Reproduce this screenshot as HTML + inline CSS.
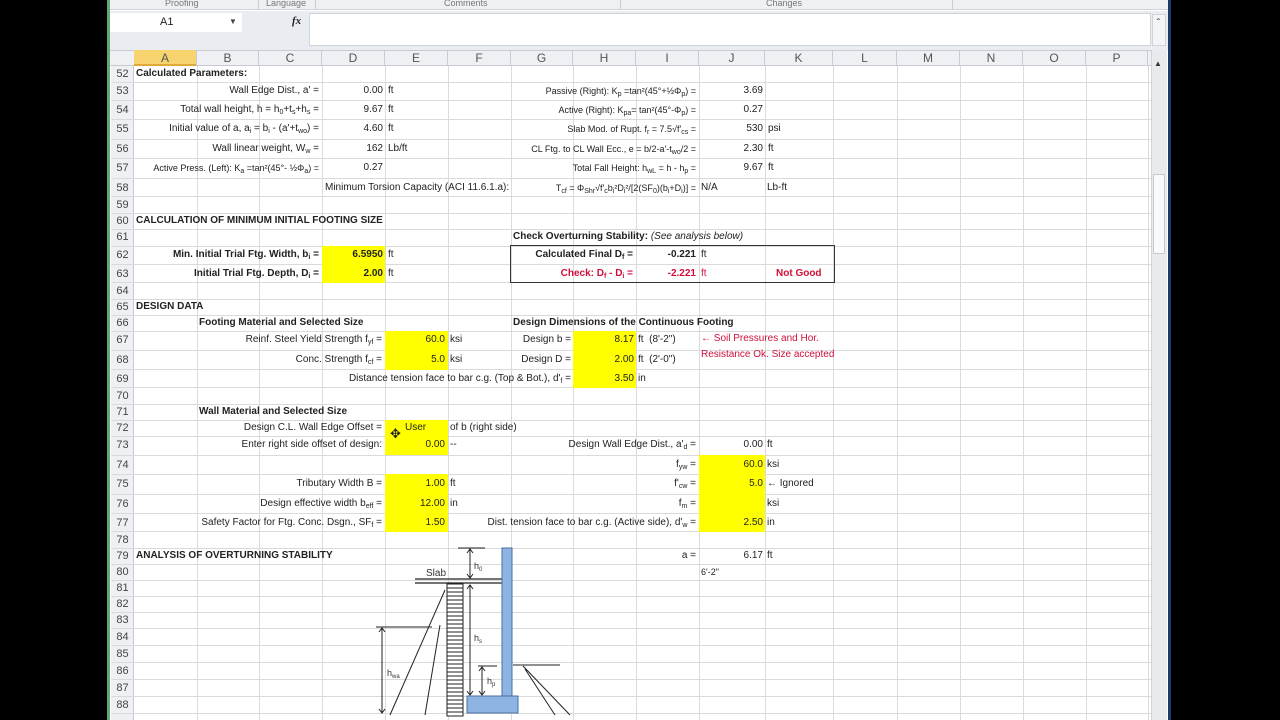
<!DOCTYPE html>
<html><head><meta charset="utf-8"><style>
*{margin:0;padding:0;box-sizing:border-box}
body{width:1280px;height:720px;background:#000;position:relative;overflow:hidden;font-family:"Liberation Sans",Arial,sans-serif;font-size:10px;color:#222}
.a{position:absolute;white-space:nowrap;line-height:12px}
.b{font-weight:bold}
.red{color:#d0103a}
.y{position:absolute;background:#ffff00}
.h{position:absolute;left:111px;height:1px;width:1040px;background:#dadada}
.v{position:absolute;top:66px;width:1px;height:654px;background:#dadada}
.rn{position:absolute;left:111px;width:23px;text-align:center;color:#444;font-size:11px;line-height:12px}
.ch{position:absolute;top:50px;height:16px;text-align:center;color:#555;font-size:12px;line-height:16px;border-right:1px solid #c8ccd2}
sub{font-size:7px;vertical-align:-2px;line-height:0}
sup{font-size:7px;line-height:0}
</style></head><body>
<div style="position:absolute;left:107px;top:0;width:1062px;height:720px;background:#fff"></div>
<div style="position:absolute;left:107px;top:0;width:3px;height:720px;background:#5faa6a"></div>
<!-- ribbon labels -->
<div style="position:absolute;left:110px;top:0;width:1058px;height:10px;background:#eef0f3;border-bottom:1px solid #cfd4da"></div>
<div class="a" style="left:165px;top:-3px;color:#777;font-size:9px">Proofing</div>
<div class="a" style="left:266px;top:-3px;color:#777;font-size:9px">Language</div>
<div class="a" style="left:444px;top:-3px;color:#777;font-size:9px">Comments</div>
<div class="a" style="left:766px;top:-3px;color:#777;font-size:9px">Changes</div>
<div style="position:absolute;left:258px;top:0;width:1px;height:10px;background:#ccc"></div>
<div style="position:absolute;left:315px;top:0;width:1px;height:10px;background:#ccc"></div>
<div style="position:absolute;left:620px;top:0;width:1px;height:10px;background:#ccc"></div>
<div style="position:absolute;left:952px;top:0;width:1px;height:10px;background:#ccc"></div>
<!-- formula bar -->
<div style="position:absolute;left:110px;top:11px;width:1058px;height:39px;background:#e9ecf0"></div>
<div style="position:absolute;left:110px;top:13px;width:132px;height:19px;background:#fff"></div>
<div class="a" style="left:160px;top:16px;font-size:11px;color:#222">A1</div>
<div class="a" style="left:229px;top:16px;font-size:8px;color:#444">▼</div>
<div class="a" style="left:292px;top:15px;font-size:11px;font-style:italic;font-family:'Liberation Serif',serif;font-weight:bold">fx</div>
<div style="position:absolute;left:309px;top:13px;width:842px;height:33px;background:#fff;border:1px solid #d0d4d9"></div>
<div style="position:absolute;left:1152px;top:14px;width:14px;height:32px;background:#f4f5f7;border:1px solid #d0d4d9"></div>
<div class="a" style="left:1155px;top:16px;font-size:8px;color:#444">⌃</div>
<!-- column headers -->
<div style="position:absolute;left:110px;top:50px;width:1042px;height:16px;background:#eef0f3;border-top:1px solid #c8ccd2;border-bottom:1px solid #c8ccd2"></div>
<div style="position:absolute;left:134px;top:50px;width:63px;height:16px;background:#f7d46e;border-bottom:2px solid #e0a93b"></div>
<div class="ch" style="left:134px;width:63px">A</div><div class="ch" style="left:197px;width:62px">B</div><div class="ch" style="left:259px;width:63px">C</div><div class="ch" style="left:322px;width:63px">D</div><div class="ch" style="left:385px;width:63px">E</div><div class="ch" style="left:448px;width:63px">F</div><div class="ch" style="left:511px;width:62px">G</div><div class="ch" style="left:573px;width:63px">H</div><div class="ch" style="left:636px;width:63px">I</div><div class="ch" style="left:699px;width:66px">J</div><div class="ch" style="left:765px;width:68px">K</div><div class="ch" style="left:833px;width:64px">L</div><div class="ch" style="left:897px;width:63px">M</div><div class="ch" style="left:960px;width:63px">N</div><div class="ch" style="left:1023px;width:63px">O</div><div class="ch" style="left:1086px;width:62px">P</div>
<!-- row header column -->
<div style="position:absolute;left:111px;top:66px;width:23px;height:654px;background:#eef0f3;border-right:1px solid #c8ccd2"></div>
<!-- scrollbar -->
<div style="position:absolute;left:1151px;top:50px;width:16px;height:670px;background:#e8eaee;border-left:1px solid #d0d4d9"></div>
<div style="position:absolute;left:1153px;top:174px;width:12px;height:80px;background:#f8f9fa;border:1px solid #c6cad0"></div>
<div class="a" style="left:1154px;top:58px;font-size:8px;color:#333">▲</div>
<div style="position:absolute;left:1168px;top:0;width:3px;height:720px;background:#1b3b6a"></div>
<!-- grid -->
<div class="v" style="left:197px"></div><div class="v" style="left:259px"></div><div class="v" style="left:322px"></div><div class="v" style="left:385px"></div><div class="v" style="left:448px"></div><div class="v" style="left:511px"></div><div class="v" style="left:573px"></div><div class="v" style="left:636px"></div><div class="v" style="left:699px"></div><div class="v" style="left:765px"></div><div class="v" style="left:833px"></div><div class="v" style="left:897px"></div><div class="v" style="left:960px"></div><div class="v" style="left:1023px"></div><div class="v" style="left:1086px"></div><div class="v" style="left:1148px"></div>
<div class="h" style="top:82px"></div><div class="h" style="top:100px"></div><div class="h" style="top:119px"></div><div class="h" style="top:139px"></div><div class="h" style="top:158px"></div><div class="h" style="top:178px"></div><div class="h" style="top:196px"></div><div class="h" style="top:213px"></div><div class="h" style="top:229px"></div><div class="h" style="top:246px"></div><div class="h" style="top:264px"></div><div class="h" style="top:282px"></div><div class="h" style="top:299px"></div><div class="h" style="top:315px"></div><div class="h" style="top:331px"></div><div class="h" style="top:350px"></div><div class="h" style="top:369px"></div><div class="h" style="top:387px"></div><div class="h" style="top:404px"></div><div class="h" style="top:420px"></div><div class="h" style="top:436px"></div><div class="h" style="top:455px"></div><div class="h" style="top:474px"></div><div class="h" style="top:494px"></div><div class="h" style="top:513px"></div><div class="h" style="top:531px"></div><div class="h" style="top:548px"></div><div class="h" style="top:564px"></div><div class="h" style="top:580px"></div><div class="h" style="top:596px"></div><div class="h" style="top:612px"></div><div class="h" style="top:628px"></div><div class="h" style="top:645px"></div><div class="h" style="top:662px"></div><div class="h" style="top:679px"></div><div class="h" style="top:696px"></div><div class="h" style="top:713px"></div>
<!-- row numbers -->
<div class="rn" style="top:68px">52</div><div class="rn" style="top:85px">53</div><div class="rn" style="top:104px">54</div><div class="rn" style="top:123px">55</div><div class="rn" style="top:143px">56</div><div class="rn" style="top:162px">57</div><div class="rn" style="top:182px">58</div><div class="rn" style="top:199px">59</div><div class="rn" style="top:215px">60</div><div class="rn" style="top:231px">61</div><div class="rn" style="top:249px">62</div><div class="rn" style="top:268px">63</div><div class="rn" style="top:285px">64</div><div class="rn" style="top:301px">65</div><div class="rn" style="top:317px">66</div><div class="rn" style="top:334px">67</div><div class="rn" style="top:354px">68</div><div class="rn" style="top:373px">69</div><div class="rn" style="top:390px">70</div><div class="rn" style="top:406px">71</div><div class="rn" style="top:422px">72</div><div class="rn" style="top:439px">73</div><div class="rn" style="top:459px">74</div><div class="rn" style="top:478px">75</div><div class="rn" style="top:498px">76</div><div class="rn" style="top:517px">77</div><div class="rn" style="top:534px">78</div><div class="rn" style="top:550px">79</div><div class="rn" style="top:566px">80</div><div class="rn" style="top:582px">81</div><div class="rn" style="top:598px">82</div><div class="rn" style="top:614px">83</div><div class="rn" style="top:631px">84</div><div class="rn" style="top:648px">85</div><div class="rn" style="top:665px">86</div><div class="rn" style="top:682px">87</div><div class="rn" style="top:699px">88</div>
<!-- yellow cells -->
<div class="y" style="left:322px;top:246px;width:63px;height:37px"></div>
<div class="y" style="left:385px;top:331px;width:63px;height:39px"></div>
<div class="y" style="left:573px;top:331px;width:63px;height:57px"></div>
<div class="y" style="left:385px;top:420px;width:63px;height:35px"></div>
<div class="y" style="left:385px;top:474px;width:63px;height:58px"></div>
<div class="y" style="left:699px;top:455px;width:66px;height:77px"></div>
<div style="position:absolute;left:510px;top:245px;width:325px;height:38px;border:1px solid #333"></div>
<!-- text -->
<div class="a b" style="left:136px;top:68px">Calculated Parameters:</div>
<div class="a" style="right:961px;top:85px">Wall Edge Dist., a' =</div><div class="a" style="right:897px;top:85px">0.00</div><div class="a" style="left:388px;top:85px">ft</div>
<div class="a" style="right:584px;top:85px;font-size:9px">Passive (Right): K<sub>p</sub> =tan²(45°+½Φ<sub>p</sub>) =</div><div class="a" style="right:517px;top:85px">3.69</div>
<div class="a" style="right:961px;top:104px">Total wall height, h = h<sub>0</sub>+t<sub>s</sub>+h<sub>s</sub> =</div><div class="a" style="right:897px;top:104px">9.67</div><div class="a" style="left:388px;top:104px">ft</div>
<div class="a" style="right:584px;top:104px;font-size:9px">Active (Right): K<sub>pa</sub>= tan²(45°-Φ<sub>p</sub>) =</div><div class="a" style="right:517px;top:104px">0.27</div>
<div class="a" style="right:961px;top:123px">Initial value of a, a<sub>i</sub> = b<sub>i</sub> - (a'+t<sub>wo</sub>) =</div><div class="a" style="right:897px;top:123px">4.60</div><div class="a" style="left:388px;top:123px">ft</div>
<div class="a" style="right:584px;top:123px;font-size:9px">Slab Mod. of Rupt. f<sub>r</sub> = 7.5√f'<sub>cs</sub> =</div><div class="a" style="right:517px;top:123px">530</div><div class="a" style="left:768px;top:123px">psi</div>
<div class="a" style="right:961px;top:143px">Wall linear weight, W<sub>w</sub> =</div><div class="a" style="right:897px;top:143px">162</div><div class="a" style="left:388px;top:143px">Lb/ft</div>
<div class="a" style="right:584px;top:143px;font-size:9px">CL Ftg. to CL Wall Ecc., e = b/2-a'-t<sub>wo</sub>/2 =</div><div class="a" style="right:517px;top:143px">2.30</div><div class="a" style="left:768px;top:143px">ft</div>
<div class="a" style="right:961px;top:162px;font-size:9px">Active Press. (Left): K<sub>a</sub> =tan²(45°- ½Φ<sub>a</sub>) =</div><div class="a" style="right:897px;top:162px">0.27</div>
<div class="a" style="right:584px;top:162px;font-size:9px">Total Fall Height: h<sub>wL</sub> = h - h<sub>p</sub> =</div><div class="a" style="right:517px;top:162px">9.67</div><div class="a" style="left:768px;top:162px">ft</div>
<div class="a" style="left:325px;top:182px">Minimum Torsion Capacity (ACI 11.6.1.a):</div>
<div class="a" style="right:584px;top:182px;font-size:9px">T<sub>cf</sub> = Φ<sub>Shr</sub>√f'<sub>c</sub>b<sub>i</sub>²D<sub>i</sub>²/[2(SF<sub>0</sub>)(b<sub>i</sub>+D<sub>i</sub>)] =</div><div class="a" style="left:701px;top:182px">N/A</div><div class="a" style="left:767px;top:182px">Lb-ft</div>
<div class="a b" style="left:136px;top:215px">CALCULATION OF MINIMUM INITIAL FOOTING SIZE</div>
<div class="a" style="left:513px;top:231px"><b>Check Overturning Stability:</b> <i>(See analysis below)</i></div>
<div class="a b" style="right:961px;top:249px">Min. Initial Trial Ftg. Width, b<sub>i</sub> =</div><div class="a b" style="right:897px;top:249px">6.5950</div><div class="a" style="left:388px;top:249px">ft</div>
<div class="a b" style="right:647px;top:249px">Calculated Final D<sub>f</sub> =</div><div class="a b" style="right:584px;top:249px">-0.221</div><div class="a" style="left:701px;top:249px">ft</div>
<div class="a b" style="right:961px;top:268px">Initial Trial Ftg. Depth, D<sub>i</sub> =</div><div class="a b" style="right:897px;top:268px">2.00</div><div class="a" style="left:388px;top:268px">ft</div>
<div class="a b red" style="right:647px;top:268px">Check: D<sub>f</sub> - D<sub>i</sub> =</div><div class="a b red" style="right:584px;top:268px">-2.221</div><div class="a red" style="left:701px;top:268px">ft</div><div class="a b red" style="left:776px;top:268px">Not Good</div>
<div class="a b" style="left:136px;top:301px">DESIGN DATA</div>
<div class="a b" style="left:199px;top:317px">Footing Material and Selected Size</div>
<div class="a b" style="left:513px;top:317px">Design Dimensions of the Continuous Footing</div>
<div class="a" style="right:898px;top:334px">Reinf. Steel Yield Strength f<sub>yf</sub> =</div><div class="a" style="right:835px;top:334px">60.0</div><div class="a" style="left:450px;top:334px">ksi</div>
<div class="a" style="right:709px;top:334px">Design b =</div><div class="a" style="right:646px;top:334px">8.17</div><div class="a" style="left:638px;top:334px">ft &nbsp;(8'-2")</div>
<div class="a red" style="left:701px;top:333px">← Soil Pressures and Hor.</div><div class="a red" style="left:701px;top:349px">Resistance Ok. Size accepted</div>
<div class="a" style="right:898px;top:354px">Conc. Strength f<sub>cf</sub> =</div><div class="a" style="right:835px;top:354px">5.0</div><div class="a" style="left:450px;top:354px">ksi</div>
<div class="a" style="right:709px;top:354px">Design D =</div><div class="a" style="right:646px;top:354px">2.00</div><div class="a" style="left:638px;top:354px">ft &nbsp;(2'-0")</div>
<div class="a" style="right:709px;top:373px">Distance tension face to bar c.g. (Top &amp; Bot.), d'<sub>f</sub> =</div><div class="a" style="right:646px;top:373px">3.50</div><div class="a" style="left:638px;top:373px">in</div>
<div class="a b" style="left:199px;top:406px">Wall Material and Selected Size</div>
<div class="a" style="right:898px;top:422px">Design C.L. Wall Edge Offset =</div><div class="a" style="left:405px;top:422px">User</div><div class="a" style="left:450px;top:422px">of b (right side)</div>
<div class="a" style="left:390px;top:428px;font-size:13px">✥</div>
<div class="a" style="right:898px;top:439px">Enter right side offset of design:</div><div class="a" style="right:835px;top:439px">0.00</div><div class="a" style="left:450px;top:439px">--</div>
<div class="a" style="right:584px;top:439px">Design Wall Edge Dist., a'<sub>d</sub> =</div><div class="a" style="right:517px;top:439px">0.00</div><div class="a" style="left:767px;top:439px">ft</div>
<div class="a" style="right:584px;top:459px">f<sub>yw</sub> =</div><div class="a" style="right:517px;top:459px">60.0</div><div class="a" style="left:767px;top:459px">ksi</div>
<div class="a" style="right:898px;top:478px">Tributary Width B =</div><div class="a" style="right:835px;top:478px">1.00</div><div class="a" style="left:450px;top:478px">ft</div>
<div class="a" style="right:584px;top:478px">f'<sub>cw</sub> =</div><div class="a" style="right:517px;top:478px">5.0</div><div class="a" style="left:767px;top:478px">← Ignored</div>
<div class="a" style="right:898px;top:498px">Design effective width b<sub>eff</sub> =</div><div class="a" style="right:835px;top:498px">12.00</div><div class="a" style="left:450px;top:498px">in</div>
<div class="a" style="right:584px;top:498px">f<sub>m</sub> =</div><div class="a" style="left:767px;top:498px">ksi</div>
<div class="a" style="right:898px;top:517px">Safety Factor for Ftg. Conc. Dsgn., SF<sub>f</sub> =</div><div class="a" style="right:835px;top:517px">1.50</div>
<div class="a" style="right:584px;top:517px">Dist. tension face to bar c.g. (Active side), d'<sub>w</sub> =</div><div class="a" style="right:517px;top:517px">2.50</div><div class="a" style="left:767px;top:517px">in</div>
<div class="a b" style="left:136px;top:550px">ANALYSIS OF OVERTURNING STABILITY</div>
<div class="a" style="right:584px;top:550px">a =</div><div class="a" style="right:517px;top:550px">6.17</div><div class="a" style="left:767px;top:550px">ft</div>
<div class="a" style="left:701px;top:566px;font-size:9px">6'-2"</div>
<!-- diagram -->
<svg style="position:absolute;left:0;top:0" width="1280" height="720">
<g stroke="#222" stroke-width="1" fill="none">
<rect x="447" y="584" width="16" height="132" fill="#fff"/>
<path d="M447 588H463M447 592H463M447 596H463M447 600H463M447 604H463M447 608H463M447 612H463M447 616H463M447 620H463M447 624H463M447 628H463M447 632H463M447 636H463M447 640H463M447 644H463M447 648H463M447 652H463M447 656H463M447 660H463M447 664H463M447 668H463M447 672H463M447 676H463M447 680H463M447 684H463M447 688H463M447 692H463M447 696H463M447 700H463M447 704H463M447 708H463M447 712H463"/>
<path d="M415 579H502M415 583H502" stroke-width="1.3"/>
<path d="M458 548H485M470 549V578M467 553L470 549L473 553M467 574L470 578L473 574"/>
<path d="M470 585V695M467 589L470 585L473 589M467 691L470 695L473 691"/>
<path d="M478 666H497M482 667V695M479 671L482 667L485 671M479 691L482 695L485 691"/>
<path d="M376 627H432M382 628V713M379 632L382 628L385 632M379 709L382 713L385 709"/>
<path d="M445 590L390 715M440 625L425 715"/>
<path d="M513 665H560M523 666L570 715M525 669L555 715"/>
</g>
<rect x="502" y="548" width="10" height="149" fill="#8eb4e3" stroke="#4a6fa0"/>
<rect x="467" y="696" width="51" height="17" fill="#8eb4e3" stroke="#4a6fa0"/>
<text x="426" y="576" font-family="Liberation Sans" font-size="10" fill="#333">Slab</text>
<text x="474" y="569" font-family="Liberation Sans" font-size="9" fill="#333">h<tspan font-size="6" dy="2">0</tspan></text>
<text x="474" y="641" font-family="Liberation Sans" font-size="9" fill="#333">h<tspan font-size="6" dy="2">s</tspan></text>
<text x="487" y="684" font-family="Liberation Sans" font-size="9" fill="#333">h<tspan font-size="6" dy="2">p</tspan></text>
<text x="387" y="676" font-family="Liberation Sans" font-size="9" fill="#333">h<tspan font-size="6" dy="2">wa</tspan></text>
</svg>
</body></html>
